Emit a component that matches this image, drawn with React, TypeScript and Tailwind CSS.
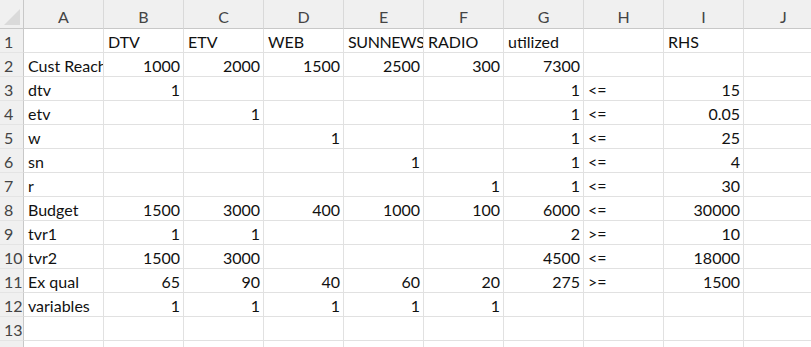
const columns = ["A", "B", "C", "D", "E", "F", "G", "H", "I", "J"];

const rows: string[][] = [
  ["", "DTV", "ETV", "WEB", "SUNNEWS", "RADIO", "utilized", "", "RHS", ""],
  ["Cust Reach", "1000", "2000", "1500", "2500", "300", "7300", "", "", ""],
  ["dtv", "1", "", "", "", "", "1", "<=", "15", ""],
  ["etv", "", "1", "", "", "", "1", "<=", "0.05", ""],
  ["w", "", "", "1", "", "", "1", "<=", "25", ""],
  ["sn", "", "", "", "1", "", "1", "<=", "4", ""],
  ["r", "", "", "", "", "1", "1", "<=", "30", ""],
  ["Budget", "1500", "3000", "400", "1000", "100", "6000", "<=", "30000", ""],
  ["tvr1", "1", "1", "", "", "", "2", ">=", "10", ""],
  ["tvr2", "1500", "3000", "", "", "", "4500", "<=", "18000", ""],
  ["Ex qual", "65", "90", "40", "60", "20", "275", ">=", "1500", ""],
  ["variables", "1", "1", "1", "1", "1", "", "", "", ""],
  ["", "", "", "", "", "", "", "", "", ""],
  ["", "", "", "", "", "", "", "", "", ""],
];

const isNumber = (v: string) => /^[\d.]+$/.test(v);

export default function App() {
  return (
    <div
      className="w-[811px] h-[347px] overflow-hidden bg-white text-[16px] text-[#111]"
      style={{ fontFamily: "Lato, 'Noto Sans', sans-serif" }}
    >
      <div className="grid grid-cols-[24px_repeat(10,80px)] w-max">
        {/* Corner */}
        <div className="h-[29px] bg-[#f0f0f0] border-r border-b border-[#c8c8c8] relative">
          <svg className="absolute left-[4px] top-[9px]" width="16" height="16" viewBox="0 0 16 16">
            <polygon points="16,0 16,16 0,16" fill="#dadada" />
          </svg>
        </div>

        {/* Column headers */}
        {columns.map((c) => (
          <div
            key={c}
            className="h-[29px] bg-[#f0f0f0] border-r border-[#d9d9d9] border-b border-b-[#c8c8c8] flex items-end justify-center pb-[1px] leading-[20px] text-[#444]"
          >
            {c}
          </div>
        ))}

        {/* Rows */}
        {rows.map((row, r) => (
          <div key={r} className="contents">
            <div className="h-[24px] bg-[#f0f0f0] border-r border-r-[#c8c8c8] border-b border-b-[#e4e4e4] flex items-end pl-[4px] leading-[20px] text-[#444]">
              {r + 1}
            </div>
            {row.map((cell, c) => (
              <div
                key={c}
                className={`h-[24px] border-r border-b border-[#e1e1e1] flex items-end overflow-hidden whitespace-nowrap leading-[20px] ${
                  isNumber(cell) ? "justify-end pr-[3px]" : "justify-start pl-[4px]"
                } ${cell === "SUNNEWS" ? "pl-[3px] tracking-[-0.4px]" : ""}`}
              >
                {cell}
              </div>
            ))}
          </div>
        ))}
      </div>
    </div>
  );
}
